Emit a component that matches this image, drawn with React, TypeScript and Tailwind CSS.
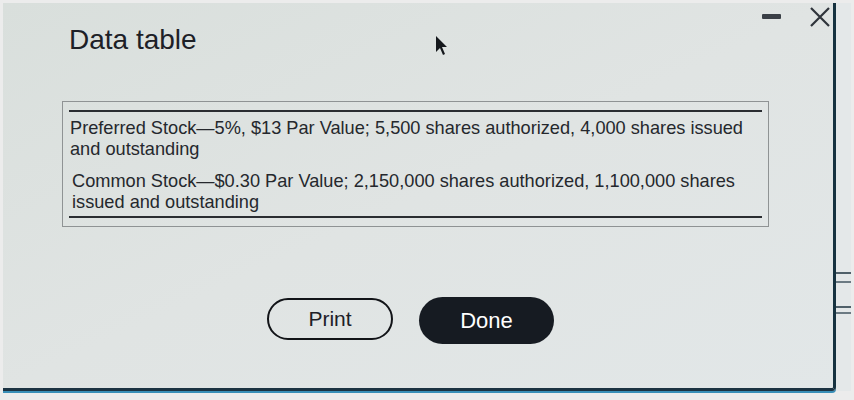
import React from "react";

const font = { fontFamily: '"Liberation Sans", Arial, sans-serif' };

const App: React.FC = () => {
  return (
    <div
      className="relative w-[854px] h-[400px] overflow-hidden bg-[#ececec] pt-[3px] pl-[3px] pr-[3px] pb-[9px]"
      style={font}
    >
      <div className="flex h-full">
        {/* dialog panel */}
        <div className="relative flex flex-col w-[833px] h-full bg-gradient-to-br from-[#d9dfdc] via-[#e0e4e3] to-[#e2e7e8] border-b-[3px] border-r-[3px] border-b-[#1c3342] border-r-[#163240] rounded-br-[4px] shadow-[0_2px_0_#3a8fb8]">
          <div className="flex items-start justify-between">
            <h1 className="pl-[66px] pt-[20px] text-[28px] leading-[34px] text-[#1d2027]">Data table</h1>
            <div className="flex items-center gap-[28px] pr-[2px] pt-[3px]">
              <div className="w-[19px] h-[5px] bg-[#3a3f46] rounded-[1px] -mt-[2px]" />
              <svg width="22" height="22" viewBox="0 0 22 22" className="text-[#2f343b]">
                <path d="M2 2 L20 20 M20 2 L2 20" stroke="currentColor" strokeWidth="2.2" fill="none" />
              </svg>
            </div>
          </div>

          {/* data table */}
          <div className="ml-[59px] mt-[44px] w-[707px] border border-[#8f9394] px-[6px] pt-[8px] pb-[8px]">
            <div className="border-t-2 border-b-2 border-[#2a2d31] pt-[6px] pb-[3px]">
              <p className="pl-[1px] text-[18.2px] leading-[21px] text-[#25282d]">
                Preferred Stock—5%, $13 Par Value; 5,500 shares authorized, 4,000 shares issued
                <br />
                and outstanding
              </p>
              <p className="pl-[3px] mt-[11px] text-[18.2px] leading-[21px] text-[#25282d]">
                Common Stock—$0.30 Par Value; 2,150,000 shares authorized, 1,100,000 shares
                <br />
                issued and outstanding
              </p>
            </div>
          </div>

          {/* buttons */}
          <div className="flex gap-[26px] ml-[264px] mt-[71px]">
            <button className="w-[126px] h-[42px] rounded-full border-2 border-[#121418] text-[21px] text-[#1d2027]">
              Print
            </button>
            <button className="w-[135px] h-[47px] -mt-[1px] rounded-full bg-[#161b22] text-[22px] text-white">
              Done
            </button>
          </div>

          {/* mouse pointer */}
          <svg
            className="absolute left-[432px] top-[32px]"
            width="14"
            height="22"
            viewBox="0 0 14 22"
          >
            <path d="M1 1 L1 17 L5 13 L8 20 L10 19 L7 12 L12 12 Z" fill="#15181c" />
          </svg>
        </div>

        {/* right strip */}
        <div className="flex-1 flex flex-col bg-[#e4e8e9]">
          <div className="h-[269px]" />
          <div className="h-[2px] bg-[#50606a]" />
          <div className="h-[7px]" />
          <div className="h-[2px] bg-[#6b7a83]" />
          <div className="h-[23px]" />
          <div className="h-[2px] bg-[#50606a]" />
          <div className="h-[4px]" />
          <div className="h-[2px] bg-[#6b7a83]" />
        </div>
      </div>
    </div>
  );
};

export default App;
